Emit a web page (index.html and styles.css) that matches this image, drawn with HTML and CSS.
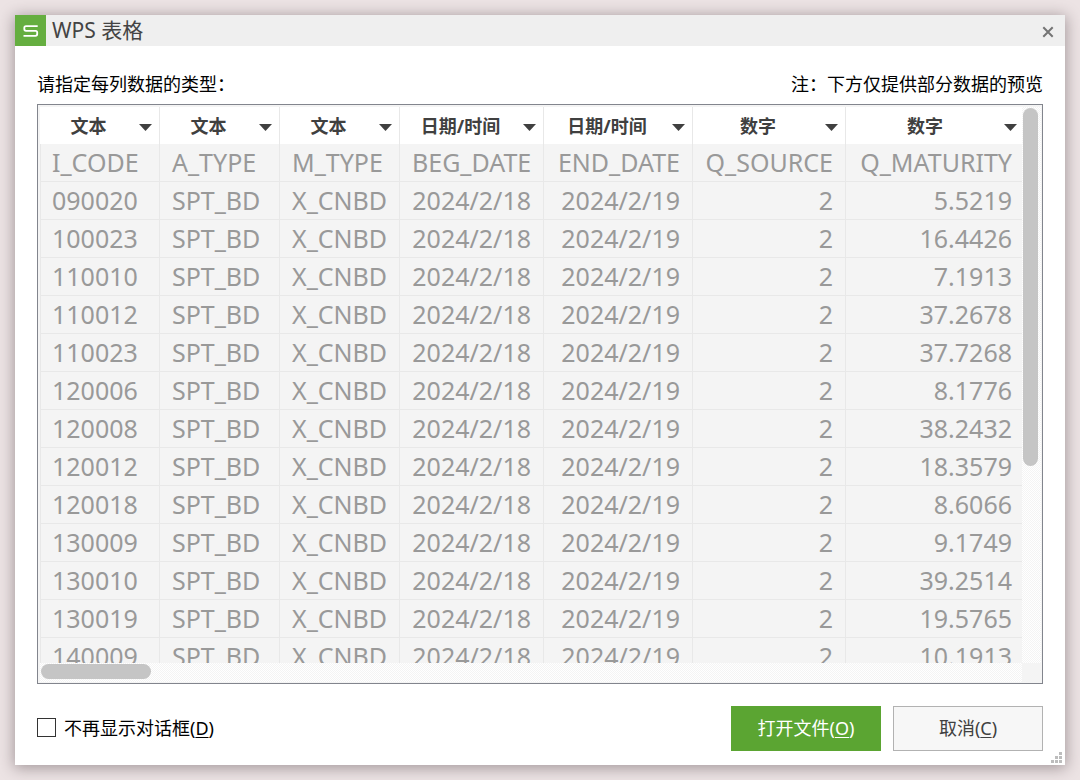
FILE: index.html
```html
<!DOCTYPE html>
<html lang="zh-CN">
<head>
<meta charset="utf-8">
<meta name="viewport" content="width=device-width, initial-scale=1">
<title>WPS 表格</title>
<link rel="stylesheet" href="styles.css">
</head>
<body>
<main class="dialog" role="dialog" aria-labelledby="dialog-title">
  <header class="titlebar">
    <svg class="logo" viewBox="0 0 31 31" aria-hidden="true"><rect width="31" height="31" fill="#65ae40"/><path d="M22.7 11.2H11Q9.3 11.2 9.3 12.9V14.1Q9.3 15.8 11 15.8H20.6Q22.2 15.8 22.2 17.5V19.1Q22.2 20.8 20.5 20.8H8.5" fill="none" stroke="#fff" stroke-width="1.8"/></svg>
    <h1 class="title" id="dialog-title">WPS 表格</h1>
    <button class="close" type="button" aria-label="关闭"><svg viewBox="0 0 12 12" aria-hidden="true"><path d="M1.3 1.3L10.7 10.7M10.7 1.3L1.3 10.7" stroke="#747474" stroke-width="2"/></svg></button>
  </header>
  <div class="content">
    <div class="captions"><p>请指定每列数据的类型：</p><p>注：下方仅提供部分数据的预览</p></div>
    <div class="preview">
      <div class="viewport">
        <table class="grid">
          <colgroup><col class="col-text"><col class="col-text"><col class="col-text"><col class="col-begin"><col class="col-end"><col class="col-source"><col class="col-maturity"></colgroup>
          <thead><tr id="types"></tr></thead>
          <tbody id="rows"></tbody>
        </table>
      </div>
      <div class="track track-v"><div class="thumb thumb-v"></div></div>
      <div class="track track-h"><div class="thumb thumb-h"></div></div>
      <div class="corner"></div>
    </div>
    <footer class="footer">
      <label class="remember" for="skip"><input class="check" type="checkbox" id="skip"><span>不再显示对话框(<u>D</u>)</span></label>
      <div class="actions">
        <button class="button primary" type="button">打开文件(<u>O</u>)</button>
        <button class="button" type="button">取消(<u>C</u>)</button>
      </div>
    </footer>
  </div>
  <svg class="grip" viewBox="0 0 11 11" aria-hidden="true"><path d="M8 0h3v3H8zM4 4h3v3H4zM8 4h3v3H8zM0 8h3v3H0zM4 8h3v3H4zM8 8h3v3H8z" fill="#bdbdbd"/></svg>
</main>
<script src="script.js"></script>
</body>
</html>
```
FILE: styles.css
```css
* { box-sizing: border-box; }

body {
  margin: 0;
  padding: 15px;
  height: 100vh;
  background: #ece3e4;
  color: #000;
  font: 18px/26px "Noto Sans", "Noto Sans CJK SC", sans-serif;
}

.dialog {
  position: relative;
  display: flex;
  flex-direction: column;
  height: 100%;
  background: #fff;
  box-shadow: 0 2px 14px 1px rgba(50, 35, 40, 0.4);
}

.titlebar {
  display: flex;
  align-items: center;
  gap: 6px;
  height: 31px;
  background: #efefef;
  color: #444;
}

.logo { width: 31px; height: 31px; }

.title {
  flex: 1;
  margin: 0;
  font-size: 21px;
  font-weight: 400;
  line-height: 31px;
}

.close {
  display: grid;
  place-items: center;
  width: 34px;
  height: 31px;
  padding: 3px 0 0;
  border: 0;
  background: none;
}

.close svg { width: 12px; height: 12px; }

.content {
  display: flex;
  flex: 1;
  flex-direction: column;
  min-height: 0;
  padding: 25px 22px 14px;
}

.captions {
  display: flex;
  justify-content: space-between;
  padding-bottom: 7px;
}

.captions p { margin: 0; }

.preview {
  display: grid;
  flex: 1;
  grid-template-columns: minmax(0, 1fr) 19px;
  grid-template-rows: minmax(0, 1fr) 19px;
  min-height: 0;
  padding: 2px 1px 1px 2px;
  border: 1px solid #82858d;
  background: #f4f4f4;
}

.viewport { overflow: hidden; }

.grid {
  width: 100%;
  border-collapse: separate;
  border-spacing: 0;
  table-layout: fixed;
  color: #999;
  font-size: 25px;
  line-height: 37px;
}

.col-text { width: 120px; }
.col-begin { width: 144px; }
.col-end { width: 149px; }
.col-source { width: 153px; }
.col-maturity { width: 176px; }

.grid th,
.grid td {
  padding: 0;
  border-right: 1px solid #e8e8e8;
  font-weight: 400;
  white-space: nowrap;
}

.grid th:last-child,
.grid td:last-child { border-right: 0; }

.grid th { background: #fff; }

.grid td {
  height: 38px;
  padding: 0 12px;
  border-bottom: 1px solid #e8e8e8;
  background: #f4f4f4;
}

.grid td:first-child { border-left: 1px solid #e8e8e8; padding-left: 11px; }
.grid .right { text-align: right; }
.grid td:last-child { padding-right: 10px; }

.type {
  display: grid;
  align-items: center;
  height: 37px;
}

.type select {
  grid-area: 1 / 1;
  width: 100%;
  height: 37px;
  margin: 0;
  padding: 0 22px 0 0;
  border: 0;
  appearance: none;
  background: none;
  color: #404040;
  font: 700 18px/26px "Noto Sans", "Noto Sans CJK SC", sans-serif;
  text-align: center;
  text-align-last: center;
}

.type svg {
  grid-area: 1 / 1;
  justify-self: end;
  width: 13px;
  height: 7px;
  margin: 3px 7px 0 0;
  pointer-events: none;
}

.grid th:last-child select { padding-right: 18px; }
.grid th:last-child svg { margin-right: 5px; }

.track {
  background: repeating-conic-gradient(#f4f4f4 0 25%, #fff 0 50%) 0 0 / 2px 2px;
}

.track-v { padding: 1px 3px 0 1px; }
.track-h { padding: 1px 0 3px 1px; }
.thumb { border-radius: 8px; background: #c5c5c5; }
.thumb-v { height: 64.5%; }
.thumb-h { width: 110px; height: 100%; }

.footer {
  display: flex;
  align-items: center;
  justify-content: space-between;
  padding-top: 22px;
}

.remember {
  display: flex;
  align-items: center;
  gap: 8px;
  padding-bottom: 2px;
}

.check {
  width: 19px;
  height: 19px;
  margin: 0;
  border: 1px solid #333;
  appearance: none;
  background: #fff;
}

.check:checked { background: #5ba532; }

u { text-underline-offset: 2px; text-decoration-thickness: 1px; }

.actions { display: flex; gap: 12px; }

.button {
  width: 150px;
  height: 45px;
  padding: 0 0 2px;
  border: 1px solid #b2b2b2;
  background: #f7f7f7;
  color: #404040;
  font: inherit;
}

.primary {
  border-color: #5ba532;
  background: #5ba532;
  color: #fff;
}

.grip {
  position: absolute;
  right: 3px;
  bottom: 2px;
  width: 11px;
  height: 11px;
}
```
FILE: script.js
```js
const types = ['文本', '文本', '文本', '日期/时间', '日期/时间', '数字', '数字'];
const fields = ['I_CODE', 'A_TYPE', 'M_TYPE', 'BEG_DATE', 'END_DATE', 'Q_SOURCE', 'Q_MATURITY'];
const records = [
  ['090020', '5.5219'], ['100023', '16.4426'], ['110010', '7.1913'],
  ['110012', '37.2678'], ['110023', '37.7268'], ['120006', '8.1776'],
  ['120008', '38.2432'], ['120012', '18.3579'], ['120018', '8.6066'],
  ['130009', '9.1749'], ['130010', '39.2514'], ['130019', '19.5765'],
  ['140009', '10.1913']
];

document.getElementById('types').innerHTML = types.map((type, i) =>
  `<th scope="col"><div class="type"><select aria-label="${fields[i]}"><option>${type}</option></select><svg viewBox="0 0 13 7" aria-hidden="true"><path d="M0 0H13L6.5 7Z" fill="#404040"/></svg></div></th>`
).join('');

const rows = [fields, ...records.map(([code, maturity]) =>
  [code, 'SPT_BD', 'X_CNBD', '2024/2/18', '2024/2/19', '2', maturity])];

document.getElementById('rows').innerHTML = rows.map(row =>
  `<tr>${row.map((value, i) => `<td${i > 2 ? ' class="right"' : ''}>${value}</td>`).join('')}</tr>`
).join('');
```
